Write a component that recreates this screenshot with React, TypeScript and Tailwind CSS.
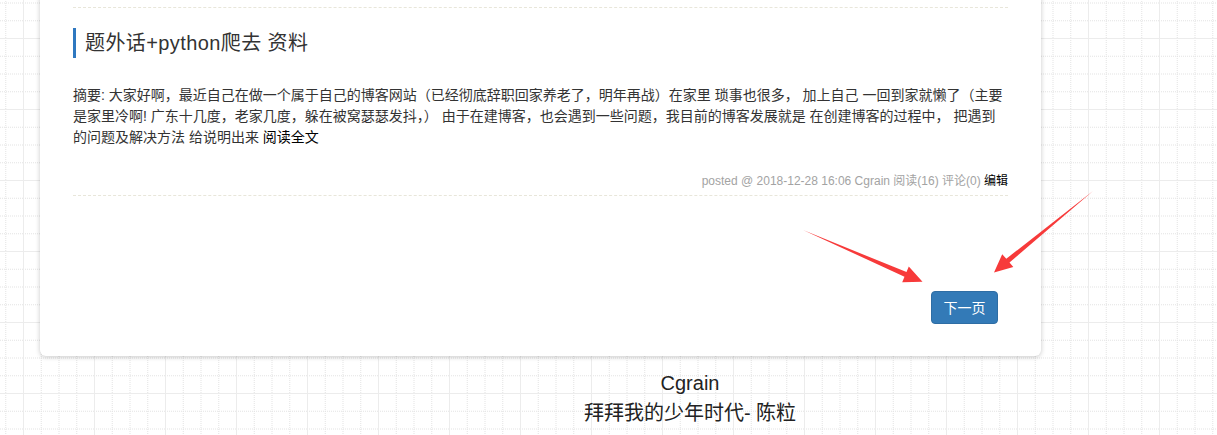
import React from "react";

const cjk = "font-['Liberation_Sans','Noto_Sans_CJK_SC',sans-serif]";

function GridBackground() {
  const minor = [17.75, 35.5, 53.25];
  return (
    <svg className="absolute inset-0 h-full w-full" xmlns="http://www.w3.org/2000/svg">
      <defs>
        <pattern id="grid" x="23" y="38" width="71" height="71" patternUnits="userSpaceOnUse">
          {minor.map((p) => (
            <g key={p}>
              <line x1={p + 0.5} y1="0" x2={p + 0.5} y2="71" stroke="#e3e3e3" strokeWidth="1" strokeDasharray="1 1" />
              <line x1="0" y1={p + 0.5} x2="71" y2={p + 0.5} stroke="#e3e3e3" strokeWidth="1" strokeDasharray="1 1" />
            </g>
          ))}
          <line x1="0.5" y1="0" x2="0.5" y2="71" stroke="#ececec" strokeWidth="1" />
          <line x1="0" y1="0.5" x2="71" y2="0.5" stroke="#ececec" strokeWidth="1" />
        </pattern>
      </defs>
      <rect width="100%" height="100%" fill="url(#grid)" />
    </svg>
  );
}

function Arrows() {
  return (
    <svg className="pointer-events-none absolute inset-0 h-full w-full" xmlns="http://www.w3.org/2000/svg">
      <polygon
        fill="#f73a3a"
        points="803,230 906.5,272.1 908.8,266.6 922.5,281.8 902.2,282.2 904.5,276.7"
      />
      <polygon
        fill="#f73a3a"
        points="1093,191 1009.5,262.5 1013.3,267.1 994,272.5 1002.2,254.2 1006.3,258.7"
      />
    </svg>
  );
}

export default function App() {
  return (
    <div className={`relative h-[435px] w-[1217px] overflow-hidden bg-white ${cjk}`}>
      <GridBackground />
      <div className="relative">
        <div className="-mt-[20px] ml-[40px] w-[1001px] rounded-md bg-white px-[33px] pt-[27px] pb-[32px] shadow-[0_1px_5px_rgba(0,0,0,0.22)]">
          <div className="border-t border-dashed border-[#e8e6da]" />
          <h2 className="mt-[20px] h-[30px] border-l-[3px] border-[#2f78c0] pl-[9px] text-[20px] leading-[31px] font-normal tracking-[0.4px] text-[#333]">
            题外话+python爬去 资料
          </h2>
          <div className="mt-[27px] text-[14px] leading-[21px] text-[#333]">
            <div className="whitespace-nowrap">
              摘要: 大家好啊，最近自己在做一个属于自己的博客网站（已经彻底辞职回家养老了，明年再战）在家里 琐事也很多， 加上自己 一回到家就懒了（主要
            </div>
            <div className="whitespace-nowrap">
              是家里冷啊! 广东十几度，老家几度，躲在被窝瑟瑟发抖，） 由于在建博客，也会遇到一些问题，我目前的博客发展就是 在创建博客的过程中， 把遇到
            </div>
            <div className="whitespace-nowrap">
              的问题及解决方法 给说明出来 <span className="text-black">阅读全文</span>
            </div>
          </div>
          <div className="mt-[24px] text-right text-[12px] leading-[18px] text-[#a3a3a3]">
            posted @ 2018-12-28 16:06 Cgrain 阅读(16) 评论(0) <span className="text-black">编辑</span>
          </div>
          <div className="mt-[5px] border-t border-dashed border-[#e8e6da]" />
          <div className="mt-[95px] flex justify-end pr-[10px]">
            <button className="h-[33px] w-[67px] rounded-[4px] border border-[#2e6da4] bg-[#337ab7] text-[14px] leading-[20px] text-white">
              下一页
            </button>
          </div>
        </div>
        <div className="mt-[12px] pl-[163px] text-center text-[20px] leading-[30px] text-[#222]">
          <div>Cgrain</div>
          <div>拜拜我的少年时代- 陈粒</div>
        </div>
      </div>
      <Arrows />
    </div>
  );
}
